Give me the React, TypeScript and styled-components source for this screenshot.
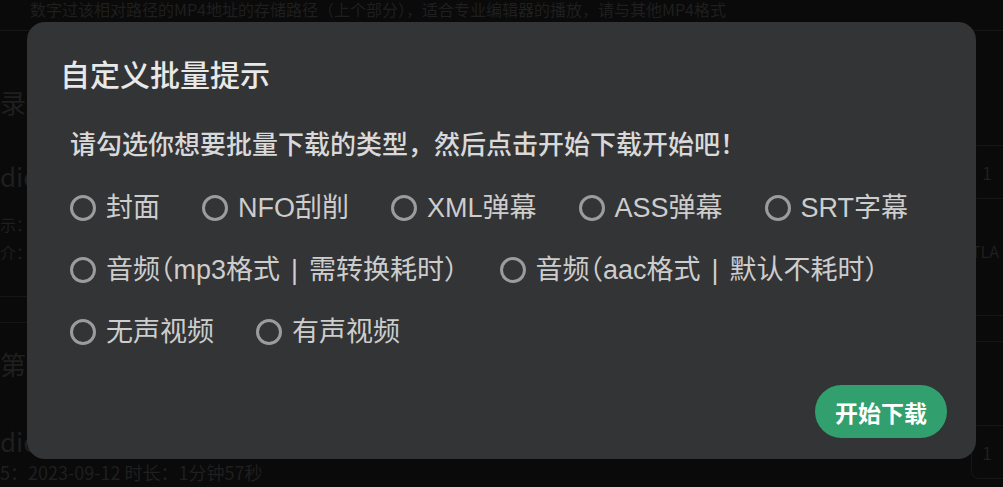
import React, { useState } from "react";
import styled, { createGlobalStyle } from "styled-components";

const GlobalStyle = createGlobalStyle`
  html, body {
    margin: 0;
    padding: 0;
    background: #0a0a0a;
    font-family: "Noto Sans CJK SC", "Noto Sans", sans-serif;
    overflow: hidden;
  }
  * { box-sizing: border-box; }
`;

const optionRows = [
  ["封面", "NFO刮削", "XML弹幕", "ASS弹幕", "SRT字幕"],
  ["音频（mp3格式 | 需转换耗时）", "音频（aac格式 | 默认不耗时）"],
  ["无声视频", "有声视频"],
];

function OptionText({ text }: { text: string }) {
  const parts = text.split(" | ");
  return (
    <OptionLabel>
      {parts.map((part, i) => (
        <React.Fragment key={i}>
          {i > 0 && <Separator>|</Separator>}
          {part}
        </React.Fragment>
      ))}
    </OptionLabel>
  );
}

function App() {
  const [checked, setChecked] = useState<string[]>([]);

  const toggle = (name: string) => {
    setChecked((prev) =>
      prev.includes(name) ? prev.filter((n) => n !== name) : [...prev, name]
    );
  };

  return (
    <>
      <GlobalStyle />
      <Page>
        <TopLine>数字过该相对路径的MP4地址的存储路径（上个部分），适合专业编辑器的播放，请与其他MP4格式</TopLine>
        <PageBody>
          <LeftColumn>
            <GhostHeading>录</GhostHeading>
            <GhostText>dio</GhostText>
            <GhostMeta>
              <GhostSmall>示：</GhostSmall>
              <GhostSmall>介：</GhostSmall>
            </GhostMeta>
            <GhostRule $width={84} />
            <GhostHeading $offset={5}>第2</GhostHeading>
            <GhostText $offset={25}>dio</GhostText>
            <GhostFoot>5：2023-09-12 时长：1分钟57秒</GhostFoot>
          </LeftColumn>
          <RightColumn>
            <GhostBox>1</GhostBox>
            <GhostSmall>TLA</GhostSmall>
            <GhostRule $width={32} />
            <GhostBox $offset={43}>1</GhostBox>
          </RightColumn>
        </PageBody>
      </Page>

      <Overlay>
        <Dialog>
          <Title>自定义批量提示</Title>
          <Prompt>请勾选你想要批量下载的类型，然后点击开始下载开始吧！</Prompt>
          <Options>
            {optionRows.map((row, i) => (
              <OptionRow key={i}>
                {row.map((name) => (
                  <Option key={name} onClick={() => toggle(name)}>
                    <Radio $on={checked.includes(name)} />
                    <OptionText text={name} />
                  </Option>
                ))}
              </OptionRow>
            ))}
          </Options>
          <Footer>
            <StartButton>开始下载</StartButton>
          </Footer>
        </Dialog>
      </Overlay>
    </>
  );
}

export default App;

const Page = styled.div`
  width: 1003px;
  height: 487px;
  overflow: hidden;
  color: #1f1f1f;
  display: flex;
  flex-direction: column;
`;

const TopLine = styled.div`
  flex-shrink: 0;
  height: 31px;
  padding-left: 30px;
  font-size: 16px;
  line-height: 18px;
  white-space: nowrap;
  border-bottom: 1px solid #161616;
`;

const PageBody = styled.div`
  flex: 1;
  display: flex;
  justify-content: space-between;
`;

const LeftColumn = styled.div`
  display: flex;
  flex-direction: column;
  padding-top: 55px;
  gap: 20px;
`;

const RightColumn = styled.div`
  display: flex;
  flex-direction: column;
  align-items: flex-start;
  width: 32px;
  padding-top: 114px;
  gap: 40px;
`;

const GhostHeading = styled.div<{ $offset?: number }>`
  font-size: 26px;
  line-height: 32px;
  margin-top: ${({ $offset = 0 }) => $offset}px;
`;

const GhostText = styled.div<{ $offset?: number }>`
  font-size: 26px;
  line-height: 32px;
  margin-top: ${({ $offset = 22 }) => $offset}px;
`;

const GhostMeta = styled.div`
  display: flex;
  flex-direction: column;
  gap: 4px;
`;

const GhostSmall = styled.div`
  font-size: 16px;
  line-height: 24px;
  white-space: nowrap;
`;

const GhostFoot = styled.div`
  margin-top: -16px;
  font-size: 18px;
  line-height: 22px;
  white-space: nowrap;
`;

const GhostRule = styled.div<{ $width: number }>`
  width: ${({ $width }) => $width}px;
  height: 27px;
  margin-top: 12px;
  border-top: 1px solid #161616;
  border-bottom: 1px solid #161616;
`;

const GhostBox = styled.div<{ $offset?: number }>`
  width: 32px;
  height: 54px;
  margin-top: ${({ $offset = 0 }) => $offset}px;
  border: 1px solid #161616;
  border-right: none;
  border-radius: 8px 0 0 8px;
  padding: 13px 10px;
  font-size: 18px;
`;

const Overlay = styled.div`
  position: fixed;
  top: 22px;
  left: 0;
  right: 0;
  bottom: 0;
  display: flex;
  justify-content: center;
  align-items: flex-start;
`;

const Dialog = styled.div`
  width: 949px;
  height: 437px;
  background: #333436;
  border-radius: 18px;
  padding: 29px 29px 21px 33px;
  display: flex;
  flex-direction: column;
`;

const Title = styled.div`
  font-size: 30px;
  line-height: 44px;
  font-weight: 500;
  color: #e8e8e8;
`;

const Prompt = styled.div`
  margin: 30px 0 0 10px;
  font-size: 26px;
  line-height: 36px;
  font-weight: 500;
  color: #d9d9d9;
`;

const Options = styled.div`
  display: flex;
  flex-direction: column;
  margin: 28px 0 0 10px;
  gap: 24px;
`;

const OptionRow = styled.div`
  display: flex;
  align-items: center;
  gap: 42px;
  height: 38px;
`;

const Option = styled.label`
  display: flex;
  align-items: center;
  gap: 10px;
  cursor: pointer;
`;

const Radio = styled.span<{ $on: boolean }>`
  width: 26px;
  height: 26px;
  border-radius: 50%;
  border: ${({ $on }) => ($on ? "8px solid #32a06e" : "3px solid #9c9c9c")};
  flex-shrink: 0;
`;

const OptionLabel = styled.span`
  font-family: "Liberation Sans", "Noto Sans CJK SC", sans-serif;
  font-feature-settings: "halt";
  font-size: 27px;
  line-height: 36px;
  color: #cdcdcd;
  white-space: nowrap;
`;

const Separator = styled.span`
  margin: 0 11px;
`;

const Footer = styled.div`
  margin-top: auto;
  display: flex;
  justify-content: flex-end;
`;

const StartButton = styled.button`
  height: 53px;
  padding: 0 20px;
  border: none;
  border-radius: 27px;
  background: #32a06e;
  color: #ffffff;
  font-family: "Noto Sans CJK SC", "Noto Sans", sans-serif;
  font-size: 23px;
  font-weight: 700;
  cursor: pointer;
`;
